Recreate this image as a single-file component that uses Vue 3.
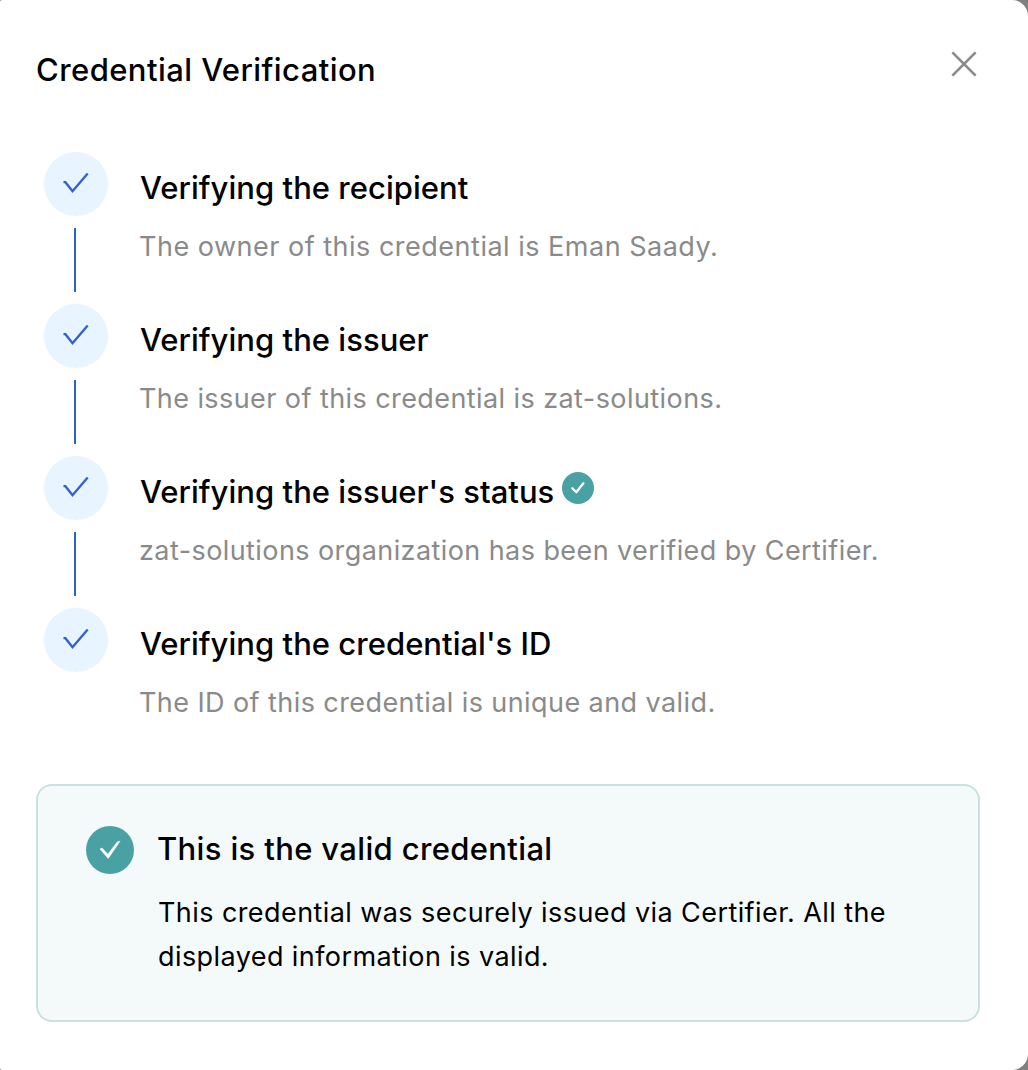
<template>
  <div class="dialog">
    <header class="dialog-header">
      <h1 class="dialog-title">Credential Verification</h1>
      <button class="close-btn" type="button" aria-label="Close">
        <svg width="28" height="28" viewBox="0 0 28 28" fill="none">
          <path d="M2.4 2.4L25.6 25.6M25.6 2.4L2.4 25.6" stroke="#8a8a8a" stroke-width="2.7" />
        </svg>
      </button>
    </header>

    <ul class="steps">
      <li v-for="step in steps" :key="step.id" class="step" :class="step.id">
        <div class="step-rail">
          <div class="step-icon">
            <svg width="64" height="64" viewBox="0 0 64 64" fill="none">
              <path d="M19.5 30.2H21.4L28.5 39.2L43.7 21.4" stroke="#2f60d3" stroke-width="2.3" />
            </svg>
          </div>
          <div class="step-line"></div>
        </div>
        <div class="step-content">
          <h2 class="step-title">
            <span class="step-label">{{ step.title }}</span>
            <svg v-if="step.verified" class="badge" width="32" height="32" viewBox="0 0 32 32" fill="none">
              <circle cx="16" cy="16" r="16" fill="#4aa1a4" />
              <path d="M10.3 16.2L14.3 20.3L21.4 11.2" stroke="#fff" stroke-width="2.2" stroke-linecap="round" stroke-linejoin="round" />
            </svg>
          </h2>
          <p class="step-desc">{{ step.desc }}</p>
        </div>
      </li>
    </ul>

    <section class="result">
      <svg class="result-icon" width="48" height="48" viewBox="0 0 48 48" fill="none">
        <circle cx="24" cy="24" r="24" fill="#4aa1a4" />
        <path d="M14 23L16 22L21.9 28.3L31.2 16L34 15.2L22.2 32.4Z" fill="#fff" stroke="#fff" stroke-width="0.6" stroke-linejoin="round" />
      </svg>
      <div class="result-content">
        <h2 class="result-title">This is the valid credential</h2>
        <p class="result-text">
          This credential was securely issued via Certifier. All the<br />
          displayed information is valid.
        </p>
      </div>
    </section>
  </div>
</template>

<script setup>
const steps = [
  {
    id: 'recipient',
    title: 'Verifying the recipient',
    desc: 'The owner of this credential is Eman Saady.'
  },
  {
    id: 'issuer',
    title: 'Verifying the issuer',
    desc: 'The issuer of this credential is zat-solutions.'
  },
  {
    id: 'status',
    title: "Verifying the issuer's status",
    desc: 'zat-solutions organization has been verified by Certifier.',
    verified: true
  },
  {
    id: 'credential',
    title: "Verifying the credential's ID",
    desc: 'The ID of this credential is unique and valid.'
  }
]
</script>

<style>
body {
  background: #808080;
}
</style>

<style scoped>
.dialog {
  box-sizing: border-box;
  height: 1070px;
  padding: 50px 48px 48px 36px;
  background: #fff;
  border-radius: 2px 16px 16px 2px;
  font-family: Inter, 'Liberation Sans', sans-serif;
  color: #000;
}

.dialog-header {
  display: flex;
  justify-content: space-between;
  height: 102px;
}

.dialog-title,
.step-title,
.result-title {
  margin: 0;
  font-size: 31px;
  font-weight: 500;
  line-height: 40px;
  white-space: nowrap;
}

.dialog-title {
  letter-spacing: 0.43px;
}

.close-btn {
  width: 28px;
  height: 28px;
  margin-right: 2px;
  padding: 0;
  border: 0;
  background: none;
}

.close-btn svg {
  display: block;
}

.steps {
  margin: 0;
  padding: 0 0 0 8px;
  list-style: none;
}

.step {
  display: flex;
  gap: 32px;
  height: 152px;
}

.step-icon {
  width: 64px;
  height: 64px;
  border-radius: 50%;
  background: #e8f4ff;
}

.step-icon svg {
  display: block;
}

.step-line {
  width: 2px;
  height: 64px;
  margin: 12px 0 0 30px;
  background: #2f60d3;
}

.step:last-child .step-line {
  display: none;
}

.step-content {
  padding-top: 16px;
}

.step-title {
  display: flex;
  gap: 8px;
  letter-spacing: 0.03px;
}

.badge {
  flex: none;
}

.step-desc {
  margin: 17px 0 0 -1px;
  font-size: 27px;
  line-height: 44px;
  letter-spacing: 0.42px;
  color: #8a8a8a;
  white-space: nowrap;
}

.recipient .step-desc {
  letter-spacing: 0.5px;
}

.result {
  display: flex;
  gap: 24px;
  box-sizing: border-box;
  height: 238px;
  margin-top: 24px;
  padding: 40px 48px;
  border: 2px solid #c9e2e1;
  border-radius: 16px;
  background: #f4fafa;
}

.result-icon {
  flex: none;
}

.result-title {
  margin: 3px 0 0 -1px;
  letter-spacing: 0.35px;
}

.result-text {
  margin: 22px 0 0;
  font-size: 27px;
  line-height: 44px;
  letter-spacing: 0.42px;
  white-space: nowrap;
}
</style>
